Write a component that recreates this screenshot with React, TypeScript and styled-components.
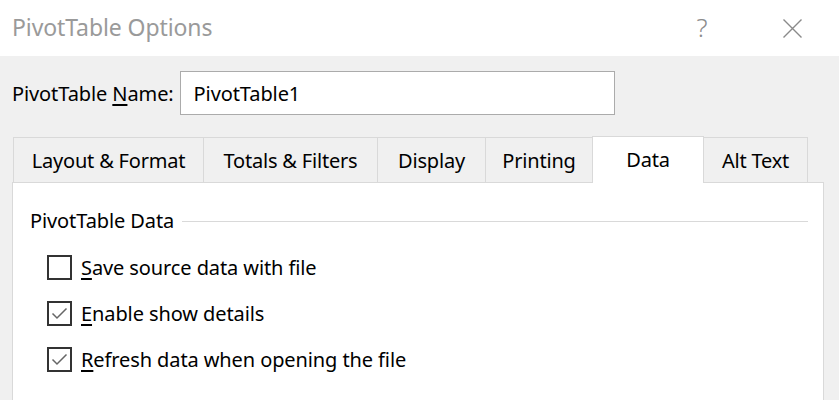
import React from 'react';
import styled, { createGlobalStyle } from 'styled-components';

const GlobalStyle = createGlobalStyle`
    html, body {
        margin: 0;
        padding: 0;
        background: #f0f0f0;
    }
    body {
        font-family: 'Noto Sans', 'Open Sans', sans-serif;
        color: #000;
    }
`;

const Dialog = styled.div`
    width: 839px;
    height: 400px;
    overflow: hidden;
    background: #f0f0f0;
    display: flex;
    flex-direction: column;
`;

const TitleBar = styled.div`
    height: 56px;
    background: #fff;
    display: flex;
    align-items: center;
    padding-left: 12px;
    flex-shrink: 0;
`;

const Title = styled.div`
    flex: 1;
    font-size: 23px;
    color: #9a9a9a;
    letter-spacing: -0.1px;
    padding-bottom: 2px;
`;

const HelpButton = styled.div`
    width: 30px;
    text-align: center;
    font-size: 26px;
    font-weight: 300;
    color: #8c8c8c;
    margin-right: 66px;
    padding-bottom: 2px;
`;

const CloseButton = styled.div`
    width: 19px;
    height: 19px;
    margin-right: 37px;
    display: flex;
`;

const NameRow = styled.div`
    display: flex;
    align-items: center;
    padding: 15px 0 0 12px;
    gap: 6px;
`;

const Label = styled.span`
    font-size: 20px;
    letter-spacing: -0.1px;
`;

const Key = styled.span`
    text-decoration: underline;
    text-underline-offset: 3px;
`;

const NameInput = styled.div`
    width: 420px;
    height: 42px;
    border: 1px solid #ababab;
    background: #fff;
    display: flex;
    align-items: center;
    padding-left: 13px;
    box-sizing: content-box;
    font-size: 20px;
    letter-spacing: -0.1px;
`;

const TabStrip = styled.div`
    display: flex;
    align-items: flex-end;
    margin: 20px 0 0 12px;
    height: 47px;
`;

const Tab = styled.div<{ $width: number; $active?: boolean }>`
    width: ${(p) => p.$width}px;
    height: ${(p) => (p.$active ? 47 : 45)}px;
    box-sizing: border-box;
    border: 1px solid #d9d9d9;
    border-bottom: none;
    margin-left: -1px;
    background: ${(p) => (p.$active ? '#fff' : '#f0f0f0')};
    display: flex;
    align-items: center;
    justify-content: center;
    font-size: 20px;
    letter-spacing: -0.2px;
    padding-bottom: ${(p) => (p.$active ? 2 : 0)}px;
    position: relative;
    z-index: ${(p) => (p.$active ? 2 : 1)};
    margin-bottom: ${(p) => (p.$active ? -1 : 0)}px;
    &:first-child {
        margin-left: 1px;
    }
`;

const Panel = styled.div`
    margin-left: 12px;
    width: 812px;
    flex: 1;
    background: #fff;
    border: 1px solid #d9d9d9;
    border-bottom: none;
    box-sizing: border-box;
    padding: 24px 15px 0 17px;
`;

const GroupHeader = styled.div`
    display: flex;
    align-items: center;
    gap: 8px;
`;

const GroupTitle = styled.span`
    font-size: 20px;
    letter-spacing: -0.1px;
`;

const GroupLine = styled.div`
    flex: 1;
    height: 1px;
    background: #d9d9d9;
    margin-top: 2px;
`;

const OptionList = styled.div`
    display: flex;
    flex-direction: column;
    gap: 19px;
    padding: 20px 0 0 17px;
`;

const OptionRow = styled.div`
    display: flex;
    align-items: center;
    gap: 9px;
`;

const Box = styled.div`
    width: 25px;
    height: 25px;
    box-sizing: border-box;
    border: 2px solid #333;
    background: #fff;
    display: flex;
    align-items: center;
    justify-content: center;
`;

function CheckBox({ checked }: { checked: boolean }) {
    return (
        <Box>
            {checked && (
                <svg width="21" height="21" viewBox="0 0 21 21">
                    <path d="M3.5 10.5 L8 15 L17.5 5.5" fill="none" stroke="#666" strokeWidth="1.5" />
                </svg>
            )}
        </Box>
    );
}

const tabs = [
    { name: 'Layout & Format', width: 191 },
    { name: 'Totals & Filters', width: 175 },
    { name: 'Display', width: 109 },
    { name: 'Printing', width: 108 },
    { name: 'Data', width: 112, active: true },
    { name: 'Alt Text', width: 105 },
];

const options = [
    { key: 'S', rest: 'ave source data with file', checked: false },
    { key: 'E', rest: 'nable show details', checked: true },
    { key: 'R', rest: 'efresh data when opening the file', checked: true },
];

export default function App() {
    return (
        <Dialog>
            <GlobalStyle />
            <TitleBar>
                <Title>PivotTable Options</Title>
                <HelpButton>?</HelpButton>
                <CloseButton>
                    <svg width="19" height="19" viewBox="0 0 19 19">
                        <path d="M0.5 0.5 L18.5 18.5 M18.5 0.5 L0.5 18.5" stroke="#8a8a8a" strokeWidth="1.4" />
                    </svg>
                </CloseButton>
            </TitleBar>
            <NameRow>
                <Label>
                    PivotTable <Key>N</Key>ame:
                </Label>
                <NameInput>PivotTable1</NameInput>
            </NameRow>
            <TabStrip>
                {tabs.map((t) => (
                    <Tab key={t.name} $width={t.width} $active={t.active}>
                        {t.name}
                    </Tab>
                ))}
            </TabStrip>
            <Panel>
                <GroupHeader>
                    <GroupTitle>PivotTable Data</GroupTitle>
                    <GroupLine />
                </GroupHeader>
                <OptionList>
                    {options.map((o) => (
                        <OptionRow key={o.key}>
                            <CheckBox checked={o.checked} />
                            <Label>
                                <Key>{o.key}</Key>
                                {o.rest}
                            </Label>
                        </OptionRow>
                    ))}
                </OptionList>
            </Panel>
        </Dialog>
    );
}
